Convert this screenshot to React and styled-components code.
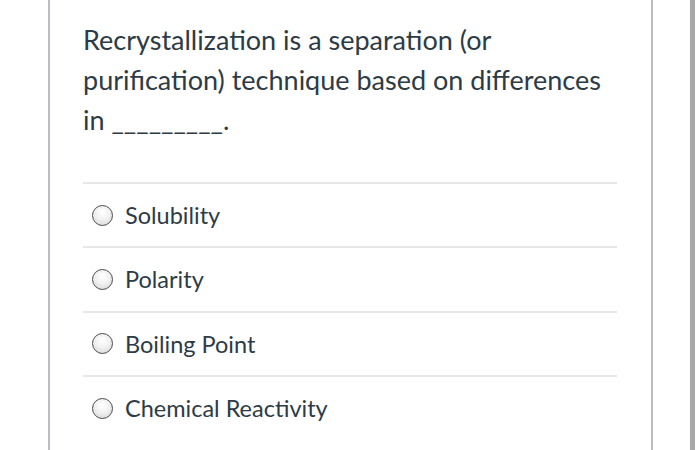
import React from "react";
import styled, { createGlobalStyle } from "styled-components";

const Global = createGlobalStyle`
  html, body { margin: 0; padding: 0; background: #ffffff; }
  body { font-family: Lato, "Open Sans", sans-serif; color: #2d3b45; }
`;

const Page = styled.div`
  display: flex;
  height: 450px;
  overflow: hidden;
  padding-left: 48px;
`;

const Card = styled.div`
  width: 605px;
  box-sizing: border-box;
  border-left: 2px solid #b9bdc0;
  border-right: 2px solid #b9bdc0;
  padding: 20px 34px 0 33px;
`;

const Strip = styled.div`
  width: 5px;
  margin-left: 37px;
  background: #a9a9a9;
`;

const Question = styled.p`
  margin: 0 0 42px;
  font-size: 27px;
  line-height: 40px;
  color: #2d3b45;
`;

const Options = styled.div`
  display: flex;
  flex-direction: column;
`;

const Option = styled.label`
  display: flex;
  align-items: center;
  gap: 12px;
  height: 62.3px;
  box-sizing: content-box;
  border-top: 2px solid #e6e7e8;
  padding: 0 0 6px 9px;
  margin-bottom: -6px;
  font-size: 23.5px;
  color: #2d3b45;
`;

const Radio = styled.span`
  width: 19px;
  height: 19px;
  border-radius: 50%;
  border: 1.5px solid #4a4a4a;
  background: radial-gradient(circle at 50% 35%, #ffffff 0%, #f1f1f1 45%, #d4d4d4 100%);
  flex: none;
`;

const choices = ["Solubility", "Polarity", "Boiling Point", "Chemical Reactivity"];

export default function App() {
  return (
    <>
      <Global />
      <Page>
        <Card>
          <Question>
            Recrystallization is a separation (or purification) technique based on differences in _________.
          </Question>
          <Options>
            {choices.map((c) => (
              <Option key={c}>
                <Radio />
                {c}
              </Option>
            ))}
          </Options>
        </Card>
        <Strip />
      </Page>
    </>
  );
}
